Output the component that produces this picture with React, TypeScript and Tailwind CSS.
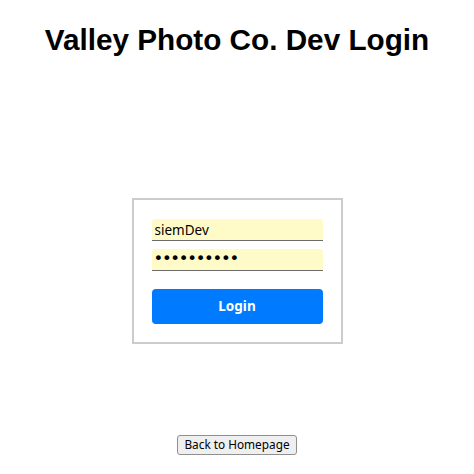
export default function App() {
  return (
    <div className="flex min-h-[474px] flex-col items-center bg-white" style={{ fontFamily: '"Noto Sans", sans-serif' }}>
      <h1 className="mt-[23px] text-[29.7px] font-bold leading-[34px] text-black" style={{ fontFamily: '"Liberation Sans", Arial, sans-serif' }}>
        Valley Photo Co. Dev Login
      </h1>

      <form className="mt-[141px] flex w-[211px] flex-col border-2 border-[#cccccc] px-[18px] pt-[19px] pb-[18px]">
        <input
          type="text"
          defaultValue="siemDev"
          className="h-[22px] w-full rounded-t-[3px] border-b border-[#6b6b6b] bg-[#fffbc9] px-[3px] text-[13.5px] text-black outline-none"
        />
        <input
          type="password"
          defaultValue="secretpass"
          className="mt-[8px] h-[22px] w-full rounded-t-[3px] border-b border-[#6b6b6b] bg-[#fffbc9] px-[2px] text-[16.5px] tracking-[-1.3px] text-black outline-none"
          style={{ fontFamily: '"DejaVu Sans", sans-serif' }}
        />
        <button
          type="button"
          className="mt-[18px] h-[35px] w-full rounded-[4px] bg-[#007bff] text-[13.5px] font-bold text-white"
        >
          Login
        </button>
      </form>

      <button
        type="button"
        className="mt-[91px] h-[20px] rounded-[3px] border border-[#8f8f8f] bg-[#efefef] px-[6px] text-[11.8px] leading-none text-black"
      >
        Back to Homepage
      </button>
    </div>
  );
}
